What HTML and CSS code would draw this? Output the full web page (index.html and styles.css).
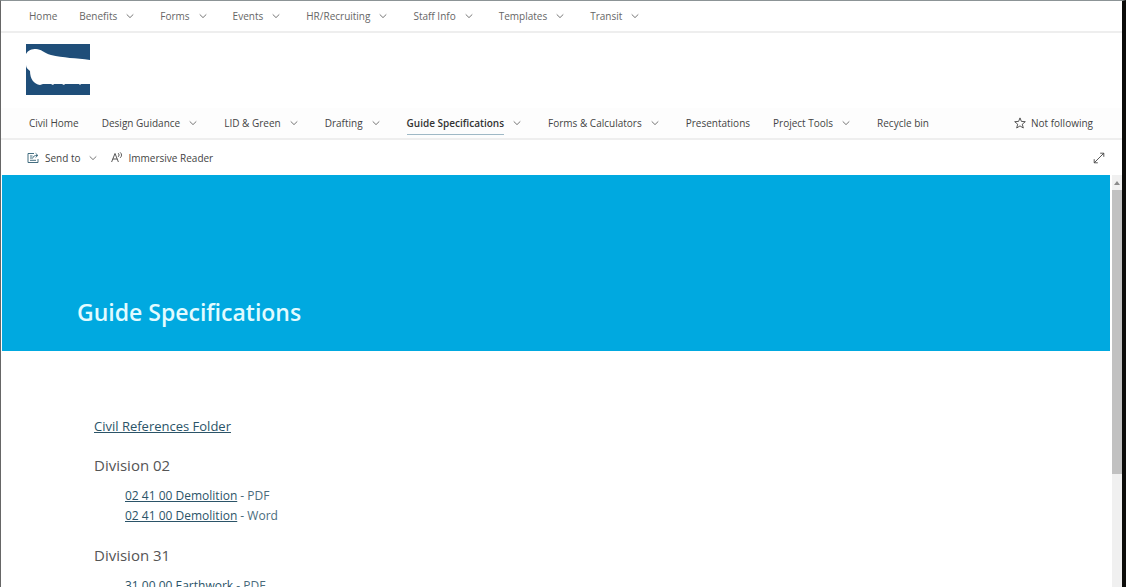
FILE: index.html
```
<!DOCTYPE html>
<html lang="en">
<head>
    <meta charset="UTF-8">
    <meta name="viewport" content="width=device-width, initial-scale=1.0">
    <title>Guide Specifications</title>
    <link rel="stylesheet" href="styles.css">
</head>
<body>
    <svg class="defs" aria-hidden="true">
        <symbol id="chevron" viewBox="0 0 8 8">
            <path d="M0.7 2.4 L4 5.6 L7.3 2.4" fill="none" stroke="currentColor"/>
        </symbol>
    </svg>

    <div class="page">
        <nav class="nav hub-nav" aria-label="Hub">
            <a href="#">Home</a>
            <button type="button">Benefits<svg class="chev"><use href="#chevron"/></svg></button>
            <button type="button">Forms<svg class="chev"><use href="#chevron"/></svg></button>
            <button type="button">Events<svg class="chev"><use href="#chevron"/></svg></button>
            <button type="button">HR/Recruiting<svg class="chev"><use href="#chevron"/></svg></button>
            <button type="button">Staff Info<svg class="chev"><use href="#chevron"/></svg></button>
            <button type="button">Templates<svg class="chev"><use href="#chevron"/></svg></button>
            <button type="button">Transit<svg class="chev"><use href="#chevron"/></svg></button>
        </nav>

        <header class="site-header">
            <a href="#" aria-label="Site home">
                <svg class="logo" viewBox="0 0 64 51">
                    <rect width="64" height="51" fill="#1f4e79"/>
                    <path d="M0 10 C2 6 6 5 10 5 C15 5 18 9 25 11 C37 14 50 14 64 16 V40 H55 L54 41 L53 40 H39 L38 41 L36 40 H28 L27 41 L25 40 H17 L14 41 C8 40 4 35 4 27 C2 25 0 24 0 21 Z" fill="#fff"/>
                </svg>
            </a>
        </header>

        <nav class="nav site-nav" aria-label="Site">
            <a href="#">Civil Home</a>
            <button type="button">Design Guidance<svg class="chev"><use href="#chevron"/></svg></button>
            <button type="button">LID &amp; Green<svg class="chev"><use href="#chevron"/></svg></button>
            <button type="button">Drafting<svg class="chev"><use href="#chevron"/></svg></button>
            <button type="button" class="active"><span>Guide Specifications</span><svg class="chev"><use href="#chevron"/></svg></button>
            <button type="button">Forms &amp; Calculators<svg class="chev"><use href="#chevron"/></svg></button>
            <a href="#">Presentations</a>
            <button type="button">Project Tools<svg class="chev"><use href="#chevron"/></svg></button>
            <a href="#">Recycle bin</a>
            <button type="button" class="follow">
                <svg class="icon" viewBox="0 0 12 12"><path d="M6 0.9 L7.4 4.4 L11.3 4.7 L8.3 7.2 L9.3 11 L6 8.9 L2.7 11 L3.7 7.2 L0.7 4.7 L4.6 4.4 Z" fill="none" stroke="currentColor" stroke-width="0.9"/></svg>
                Not following
            </button>
        </nav>

        <div class="commands">
            <button type="button">
                <svg class="icon send" viewBox="0 0 12 12"><path d="M1 1.5 H7 M1 1.5 V10.5 H11 V7 M3 4 H5.5 M3 6 H5 M3 8.3 H9 M5.5 6.5 C6 4.4 7.5 3.4 10.5 3.4 M8.6 1.3 L10.8 3.4 L8.6 5.5" fill="none" stroke="currentColor" stroke-width="0.9"/></svg>
                Send to
                <svg class="chev"><use href="#chevron"/></svg>
            </button>
            <button type="button">
                <svg class="icon" viewBox="0 0 12 12"><path d="M0.6 10 L4 1.5 L7.4 10 M1.8 7 H6.2 M7.2 1.2 C8.3 2.2 8.3 3.8 7.2 4.8 M9.2 0.4 C11 2 11 4.2 9.2 5.8" fill="none" stroke="currentColor" stroke-width="0.9"/></svg>
                Immersive Reader
            </button>
            <button type="button" class="expand" aria-label="Expand content">
                <svg class="icon" viewBox="0 0 12 12"><path d="M1.2 10.8 L10.8 1.2 M7.2 1.2 H10.8 V4.8 M1.2 7.2 V10.8 H4.8" fill="none" stroke="currentColor" stroke-width="0.9"/></svg>
            </button>
        </div>

        <div class="scroll-area">
            <main>
                <div class="hero">
                    <h1>Guide Specifications</h1>
                </div>
                <div class="content">
                    <p><a href="#">Civil References Folder</a></p>
                    <h2>Division 02</h2>
                    <ul>
                        <li><a href="#">02 41 00 Demolition</a> - PDF</li>
                        <li><a href="#">02 41 00 Demolition</a> - Word</li>
                    </ul>
                    <h2>Division 31</h2>
                    <ul>
                        <li><a href="#">31 00 00 Earthwork</a> - PDF</li>
                    </ul>
                </div>
            </main>
            <div class="scrollbar">
                <svg class="arrow" viewBox="0 0 10 15"><path d="M2 10 L5 6 L8 10 Z" fill="#8a8a8a"/></svg>
                <div class="thumb"></div>
            </div>
        </div>
    </div>
</body>
</html>
```
FILE: styles.css
```
* {
    box-sizing: border-box;
}
body {
    margin: 0;
    font-family: "Open Sans", "Noto Sans", sans-serif;
    font-size: 10px;
    color: #444;
    background: #fff;
}
.defs {
    display: none;
}
.page {
    height: 100vh;
    display: flex;
    flex-direction: column;
    overflow: hidden;
    border-top: 1px solid #8c9496;
    border-left: 1px solid #666;
    border-right: 4px solid #0c0c0a;
}
button {
    display: flex;
    align-items: center;
    padding: 0;
    border: none;
    background: none;
    font: inherit;
    color: inherit;
    white-space: nowrap;
    cursor: pointer;
}
.chev {
    width: 8px;
    height: 8px;
    margin-left: 9px;
    margin-right: 4px;
    color: #777;
}
.icon {
    width: 12px;
    height: 12px;
    flex: none;
}

/* navigation rows */
.nav {
    display: flex;
    align-items: center;
    gap: 22px;
    padding: 0 29px 0 28px;
    border-bottom: 2px solid #eee;
    flex: none;
}
.nav a {
    color: inherit;
    text-decoration: none;
    white-space: nowrap;
}
.hub-nav {
    height: 32px;
    color: #666;
}
.site-header {
    flex: none;
    height: 75px;
    padding: 11px 25px;
}
.logo {
    display: block;
    width: 64px;
    height: 51px;
}
.site-nav {
    height: 32px;
    gap: 23px;
    background: #fdfdfd;
}
.active {
    color: #333;
    font-weight: 600;
}
.active span {
    border-bottom: 1px solid #9fb9c6;
    line-height: 22px;
}
.follow {
    margin-left: auto;
    gap: 5px;
}

.commands {
    flex: none;
    height: 35px;
    display: flex;
    align-items: center;
    gap: 10px;
    padding: 0 17px 0 26px;
}
.commands button {
    gap: 6px;
}
.commands .chev {
    margin-left: 2px;
}
.send {
    color: #2f5d73;
}
.commands .expand {
    margin-left: auto;
}

/* page body */
.scroll-area {
    flex: 1;
    min-height: 0;
    display: flex;
}
main {
    flex: 1;
    overflow: hidden;
    padding: 0 2px 0 1px;
}
.hero {
    height: 176px;
    display: flex;
    align-items: flex-end;
    padding: 0 75px 23px;
    background: #00a9e0;
}
h1 {
    margin: 0;
    font-size: 23px;
    line-height: 32px;
    font-weight: 600;
    color: #e2fbff;
}
.content {
    padding: 65px 92px;
    font-size: 12px;
    line-height: 20px;
}
.content p {
    margin: 0;
    font-size: 13px;
}
.content a {
    color: #2b5468;
    text-decoration: underline;
}
h2 {
    margin: 18px 0 10px;
    font-size: 15px;
    line-height: 22px;
    font-weight: 400;
    color: #555;
}
ul {
    margin: 0;
    padding: 0 0 0 31px;
    list-style: none;
    color: #4a6c7c;
}

.scrollbar {
    width: 10px;
    display: flex;
    flex-direction: column;
    background: #f0f0f0;
}
.arrow {
    width: 10px;
    height: 15px;
    flex: none;
}
.thumb {
    height: 69%;
    background: #c1c1c1;
}
```
